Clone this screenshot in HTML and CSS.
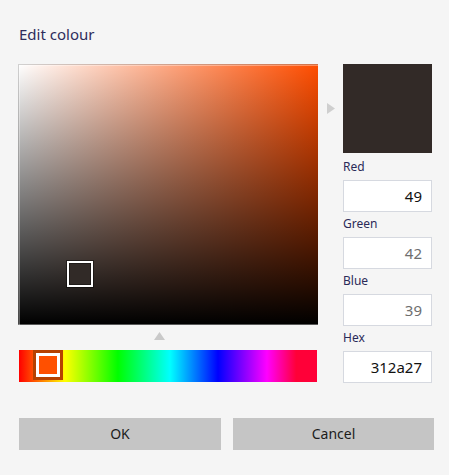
FILE: index.html
```html
<!DOCTYPE html>
<html>
<head>
<meta charset="utf-8">
<link rel="stylesheet" href="styles.css">
</head>
<body>
<div class="dialog">
  <div class="title">Edit colour</div>
  <div class="main">
    <div class="left">
      <div class="sv">
        <div class="sv-thumb"></div>
      </div>
      <svg class="tri-up" width="11" height="8" viewBox="0 0 11 8"><polygon points="5.5,0 11,8 0,8" fill="#c9c9c9"/></svg>
      <div class="hue">
        <div class="hue-thumb"></div>
      </div>
    </div>
    <div class="mid">
      <svg class="tri-right" width="8" height="11" viewBox="0 0 8 11"><polygon points="0,0 8,5.5 0,11" fill="#cfcfcf"/></svg>
    </div>
    <div class="right">
      <div class="swatch"></div>
      <div class="label first">Red</div>
      <div class="field">49</div>
      <div class="label">Green</div>
      <div class="field dim">42</div>
      <div class="label">Blue</div>
      <div class="field dim">39</div>
      <div class="label">Hex</div>
      <div class="field">312a27</div>
    </div>
  </div>
  <div class="buttons">
    <div class="btn ok">OK</div>
    <div class="btn cancel">Cancel</div>
  </div>
</div>
</body>
</html>
```
FILE: styles.css
```css
html, body {
  margin: 0;
  padding: 0;
  background: #f5f5f5;
}
body {
  font-family: "Noto Sans", "Open Sans", sans-serif;
  width: 449px;
  height: 475px;
  overflow: hidden;
}
.dialog {
  padding-left: 18px;
}
.title {
  margin: 24px 0 0 1px;
  font-size: 15px;
  line-height: 20px;
  height: 20px;
  color: #2e2c5c;
}
.main {
  display: flex;
  margin-top: 20px;
}
.left {
  width: 300px;
  display: flex;
  flex-direction: column;
}
.sv {
  position: relative;
  width: 300px;
  height: 261px;
  background:
    linear-gradient(to bottom, rgba(0,0,0,0), #000),
    linear-gradient(to right, #fff, #ff4d00);
  box-shadow: inset 1px 1px 0 rgba(0,0,0,0.18), inset 2px 2px 0 rgba(255,255,255,0.35), inset 0 -1px 0 rgba(255,255,255,0.35);
}
.sv-thumb {
  position: absolute;
  left: 49px;
  top: 197px;
  width: 22px;
  height: 22px;
  border: 2px solid #fff;
  background: #312a27;
  box-shadow: 0 0 0 1px rgba(0,0,0,0.45), inset 0 0 0 1px rgba(0,0,0,0.35);
}
.tri-up {
  display: block;
  margin: 7px 0 0 136px;
}
.hue {
  position: relative;
  margin: 10px 0 0 1px;
  width: 298px;
  height: 32px;
  background: linear-gradient(to right,
    #ff0000 0%, #ffff00 15.4%, #00ff00 33.2%, #00ffff 50.7%, #0000ff 66.8%, #ff00ff 83.2%, #ff0038 93%, #ff0038 100%);
}
.hue-thumb {
  position: absolute;
  left: 14px;
  top: 0;
  width: 24px;
  height: 24px;
  border: 3px solid rgba(110, 50, 0, 0.5);
  background: #ff5000;
  box-shadow: inset 0 0 0 3px #fff;
}
.mid {
  width: 25px;
}
.tri-right {
  display: block;
  margin: 39px 0 0 9px;
}
.right {
  width: 89px;
  display: flex;
  flex-direction: column;
}
.swatch {
  width: 89px;
  height: 89px;
  background: #322a27;
}
.label {
  margin-top: 4px;
  font-size: 12px;
  line-height: 16px;
  height: 16px;
  color: #2b2a58;
}
.label.first {
  margin-top: 6px;
}
.field {
  margin-top: 5px;
  box-sizing: border-box;
  height: 32px;
  background: #fff;
  border: 1px solid #d6d9e0;
  text-align: right;
  padding-right: 9px;
  font-size: 15px;
  line-height: 30px;
  color: #111;
}
.field.dim {
  color: #6e6e6e;
}
.buttons {
  display: flex;
  gap: 12px;
  margin: 35px 0 0 1px;
}
.btn {
  height: 32px;
  background: #c5c5c5;
  text-align: center;
  font-size: 14px;
  line-height: 32px;
  color: #1c1c1c;
}
.ok { width: 202px; }
.cancel { width: 201px; }
```
